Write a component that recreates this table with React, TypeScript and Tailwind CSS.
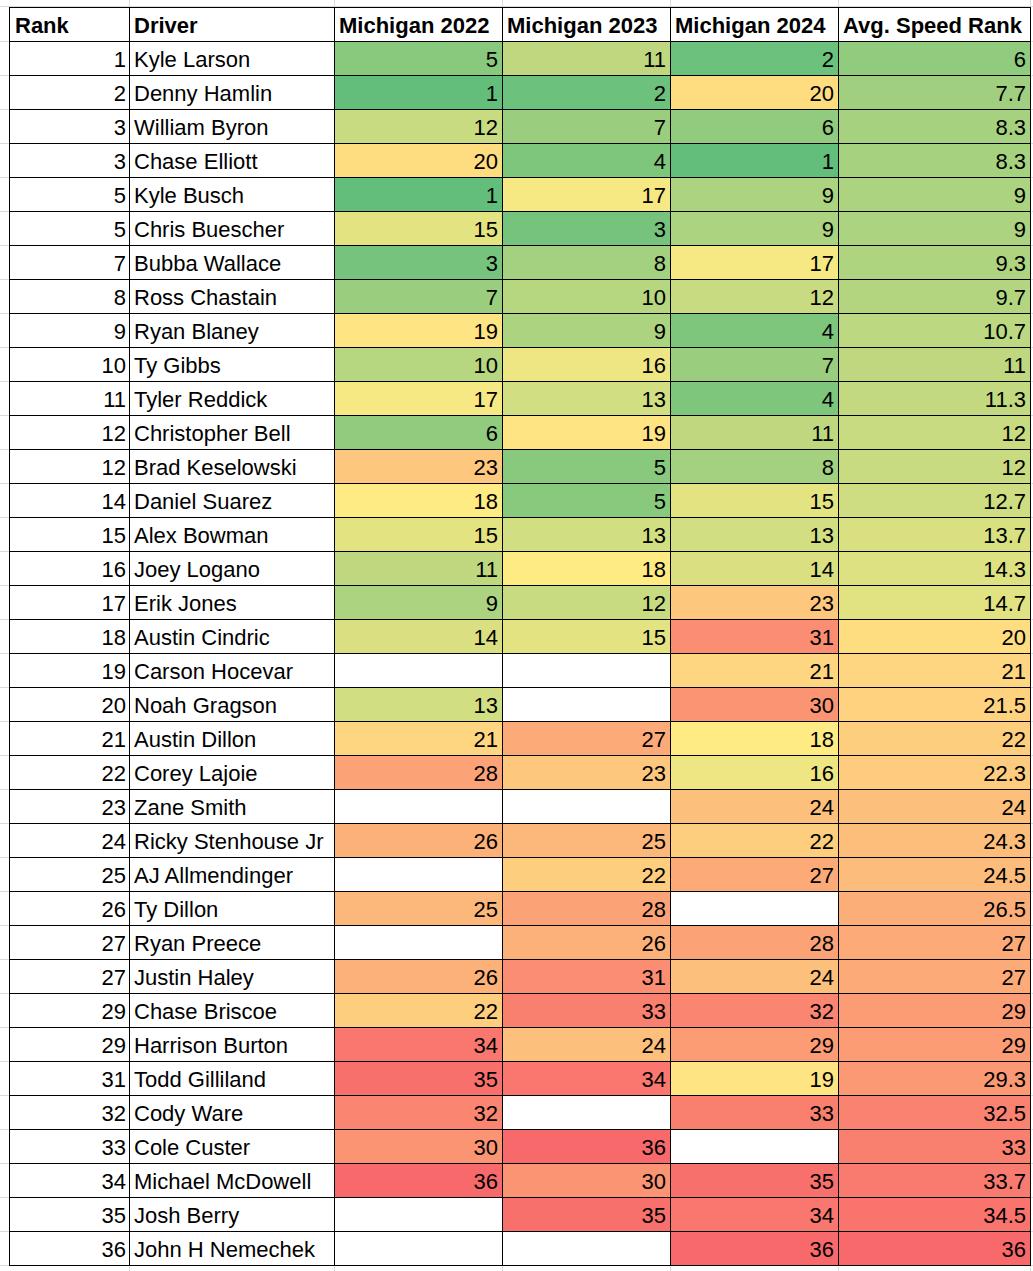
import React from "react";

type Row = [number, string, number | null, number | null, number | null, string];

const rows: Row[] = [
  [1, "Kyle Larson", 5, 11, 2, "6"],
  [2, "Denny Hamlin", 1, 2, 20, "7.7"],
  [3, "William Byron", 12, 7, 6, "8.3"],
  [3, "Chase Elliott", 20, 4, 1, "8.3"],
  [5, "Kyle Busch", 1, 17, 9, "9"],
  [5, "Chris Buescher", 15, 3, 9, "9"],
  [7, "Bubba Wallace", 3, 8, 17, "9.3"],
  [8, "Ross Chastain", 7, 10, 12, "9.7"],
  [9, "Ryan Blaney", 19, 9, 4, "10.7"],
  [10, "Ty Gibbs", 10, 16, 7, "11"],
  [11, "Tyler Reddick", 17, 13, 4, "11.3"],
  [12, "Christopher Bell", 6, 19, 11, "12"],
  [12, "Brad Keselowski", 23, 5, 8, "12"],
  [14, "Daniel Suarez", 18, 5, 15, "12.7"],
  [15, "Alex Bowman", 15, 13, 13, "13.7"],
  [16, "Joey Logano", 11, 18, 14, "14.3"],
  [17, "Erik Jones", 9, 12, 23, "14.7"],
  [18, "Austin Cindric", 14, 15, 31, "20"],
  [19, "Carson Hocevar", null, null, 21, "21"],
  [20, "Noah Gragson", 13, null, 30, "21.5"],
  [21, "Austin Dillon", 21, 27, 18, "22"],
  [22, "Corey Lajoie", 28, 23, 16, "22.3"],
  [23, "Zane Smith", null, null, 24, "24"],
  [24, "Ricky Stenhouse Jr", 26, 25, 22, "24.3"],
  [25, "AJ Allmendinger", null, 22, 27, "24.5"],
  [26, "Ty Dillon", 25, 28, null, "26.5"],
  [27, "Ryan Preece", null, 26, 28, "27"],
  [27, "Justin Haley", 26, 31, 24, "27"],
  [29, "Chase Briscoe", 22, 33, 32, "29"],
  [29, "Harrison Burton", 34, 24, 29, "29"],
  [31, "Todd Gilliland", 35, 34, 19, "29.3"],
  [32, "Cody Ware", 32, null, 33, "32.5"],
  [33, "Cole Custer", 30, 36, null, "33"],
  [34, "Michael McDowell", 36, 30, 35, "33.7"],
  [35, "Josh Berry", null, 35, 34, "34.5"],
  [36, "John H Nemechek", null, null, 36, "36"],
];

// excel 3-colour scale: green / yellow / red, one rule over the whole block
const GREEN = [99, 190, 123];
const YELLOW = [255, 235, 132];
const RED = [248, 105, 107];

function median(vals: number[]) {
  const s = [...vals].sort((a, b) => a - b);
  const m = Math.floor(s.length / 2);
  return s.length % 2 ? s[m] : (s[m - 1] + s[m]) / 2;
}

function mix(a: number[], b: number[], t: number) {
  const c = a.map((v, i) => Math.round(v + (b[i] - v) * t));
  return `rgb(${c[0]}, ${c[1]}, ${c[2]})`;
}

function makeScale(vals: number[]) {
  const min = Math.min(...vals);
  const max = Math.max(...vals);
  const mid = median(vals);
  return (v: number | null) => {
    if (v === null) return undefined;
    if (v <= mid) return mix(GREEN, YELLOW, mid === min ? 1 : (v - min) / (mid - min));
    return mix(YELLOW, RED, max === mid ? 0 : (v - mid) / (max - mid));
  };
}

const allValues: number[] = [];
rows.forEach((r) => {
  [r[2], r[3], r[4]].forEach((v) => v !== null && allValues.push(v));
  allValues.push(parseFloat(r[5]));
});
const scale = makeScale(allValues);

const grid = "border-[#dadada]";

function Spacers({ last }: { last?: boolean }) {
  return (
    <div className={`flex ${last ? "flex-1" : "h-[7px] shrink-0"}`}>
      <div className={`w-[9px] shrink-0 ${last ? "" : `border-b ${grid}`}`} />
      <div className={`w-[121px] shrink-0 border-r ${grid} ${last ? "" : `border-b`}`} />
      <div className={`w-[205px] shrink-0 border-r ${grid} ${last ? "" : "border-b"}`} />
      <div className={`w-[168px] shrink-0 border-r ${grid} ${last ? "" : "border-b"}`} />
      <div className={`w-[168px] shrink-0 border-r ${grid} ${last ? "" : "border-b"}`} />
      <div className={`w-[168px] shrink-0 border-r ${grid} ${last ? "" : "border-b"}`} />
      <div className={`w-[192px] shrink-0 border-r ${grid} ${last ? "" : "border-b"}`} />
      <div className={`flex-1 ${last ? "" : `border-b ${grid}`}`} />
    </div>
  );
}

function NumCell({ w, value, bg }: { w: string; value: string; bg?: string }) {
  return (
    <div
      className={`${w} shrink-0 border-r border-b border-black pt-px pr-[4px] text-right leading-[33px]`}
      style={{ backgroundColor: bg }}
    >
      {value}
    </div>
  );
}

export default function App() {
  return (
    <div className="flex h-[1271px] w-[1033px] flex-col overflow-hidden bg-white font-['Liberation_Sans',Arial,sans-serif] text-[22px] text-black">
      <Spacers />

      <div className="flex h-[35px] shrink-0 font-bold">
        <div className={`w-[9px] shrink-0 border-b ${grid}`} />
        <div className="w-[121px] shrink-0 border-t border-l border-r border-b border-black pt-px pl-[5px] leading-[33px]">
          Rank
        </div>
        <div className="w-[205px] shrink-0 border-t border-r border-b border-black pt-px pl-[4px] leading-[33px]">
          Driver
        </div>
        <div className="w-[168px] shrink-0 border-t border-r border-b border-black pt-px pl-[4px] leading-[33px] whitespace-nowrap">
          Michigan 2022
        </div>
        <div className="w-[168px] shrink-0 border-t border-r border-b border-black pt-px pl-[4px] leading-[33px] whitespace-nowrap">
          Michigan 2023
        </div>
        <div className="w-[168px] shrink-0 border-t border-r border-b border-black pt-px pl-[4px] leading-[33px] whitespace-nowrap">
          Michigan 2024
        </div>
        <div className="w-[192px] shrink-0 border-t border-r border-b border-black pt-px pl-[4px] leading-[33px] whitespace-nowrap">
          Avg. Speed Rank
        </div>
        <div className={`flex-1 border-b ${grid}`} />
      </div>

      {rows.map((r, i) => (
        <div key={i} className="flex h-[34px] shrink-0">
          <div className={`w-[9px] shrink-0 border-b ${grid}`} />
          <div className="w-[121px] shrink-0 border-l border-r border-b border-black pt-px pr-[3px] text-right leading-[33px]">
            {r[0]}
          </div>
          <div className="w-[205px] shrink-0 border-r border-b border-black pt-px pl-[4px] leading-[33px] whitespace-nowrap">
            {r[1]}
          </div>
          {[2, 3, 4].map((c) => (
            <NumCell
              key={c}
              w="w-[168px]"
              value={r[c] === null ? "" : String(r[c])}
              bg={scale(r[c] as number | null)}
            />
          ))}
          <NumCell w="w-[192px]" value={r[5]} bg={scale(parseFloat(r[5]))} />
          <div className={`flex-1 border-b ${grid}`} />
        </div>
      ))}

      <Spacers last />
    </div>
  );
}
